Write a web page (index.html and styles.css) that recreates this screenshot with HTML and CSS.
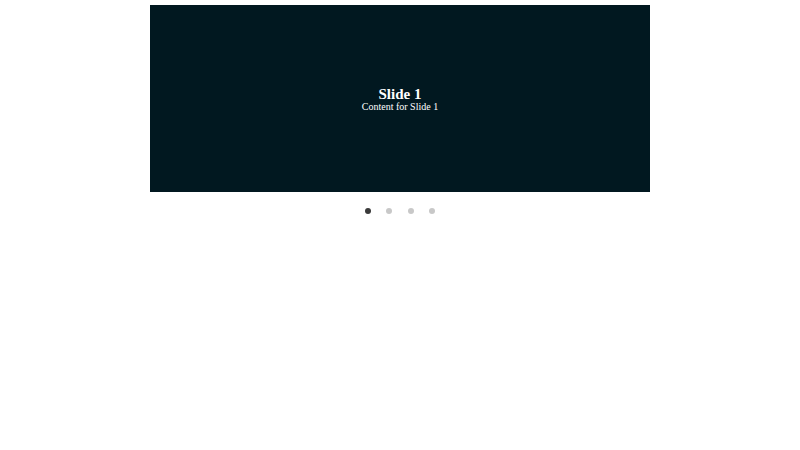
FILE: index.html
```html
<!DOCTYPE html>
<html lang="en">
<head>
<meta charset="utf-8">
<title>Carousel</title>
<link rel="stylesheet" href="styles.css">
</head>
<body>
  <div class="carousel">
    <div class="slide">
      <h2 class="slide-title">Slide 1</h2>
      <p class="slide-text">Content for Slide 1</p>
    </div>
    <div class="dots">
      <span class="dot active"></span>
      <span class="dot"></span>
      <span class="dot"></span>
      <span class="dot"></span>
    </div>
  </div>
</body>
</html>
```
FILE: styles.css
```css
body {
  margin: 0;
  background: #ffffff;
  font-family: "Liberation Serif", "Times New Roman", serif;
}

.carousel {
  width: 500px;
  margin: 5px auto 0;
}

.slide {
  height: 187px;
  box-sizing: border-box;
  padding-top: 2px;
  background: #011820;
  color: #ffffff;
  display: flex;
  flex-direction: column;
  align-items: center;
  justify-content: center;
}

.slide-title {
  margin: 0 0 -1px;
  font-size: 15px;
  font-weight: bold;
  line-height: 1;
}

.slide-text {
  margin: 0;
  font-size: 10px;
  line-height: 1.2;
}

.dots {
  display: flex;
  justify-content: center;
  gap: 15.33px;
  margin-top: 16px;
}

.dot {
  width: 6px;
  height: 6px;
  border-radius: 50%;
  background: #c8c8c8;
}

.dot.active {
  background: #3a3a3a;
}
```
